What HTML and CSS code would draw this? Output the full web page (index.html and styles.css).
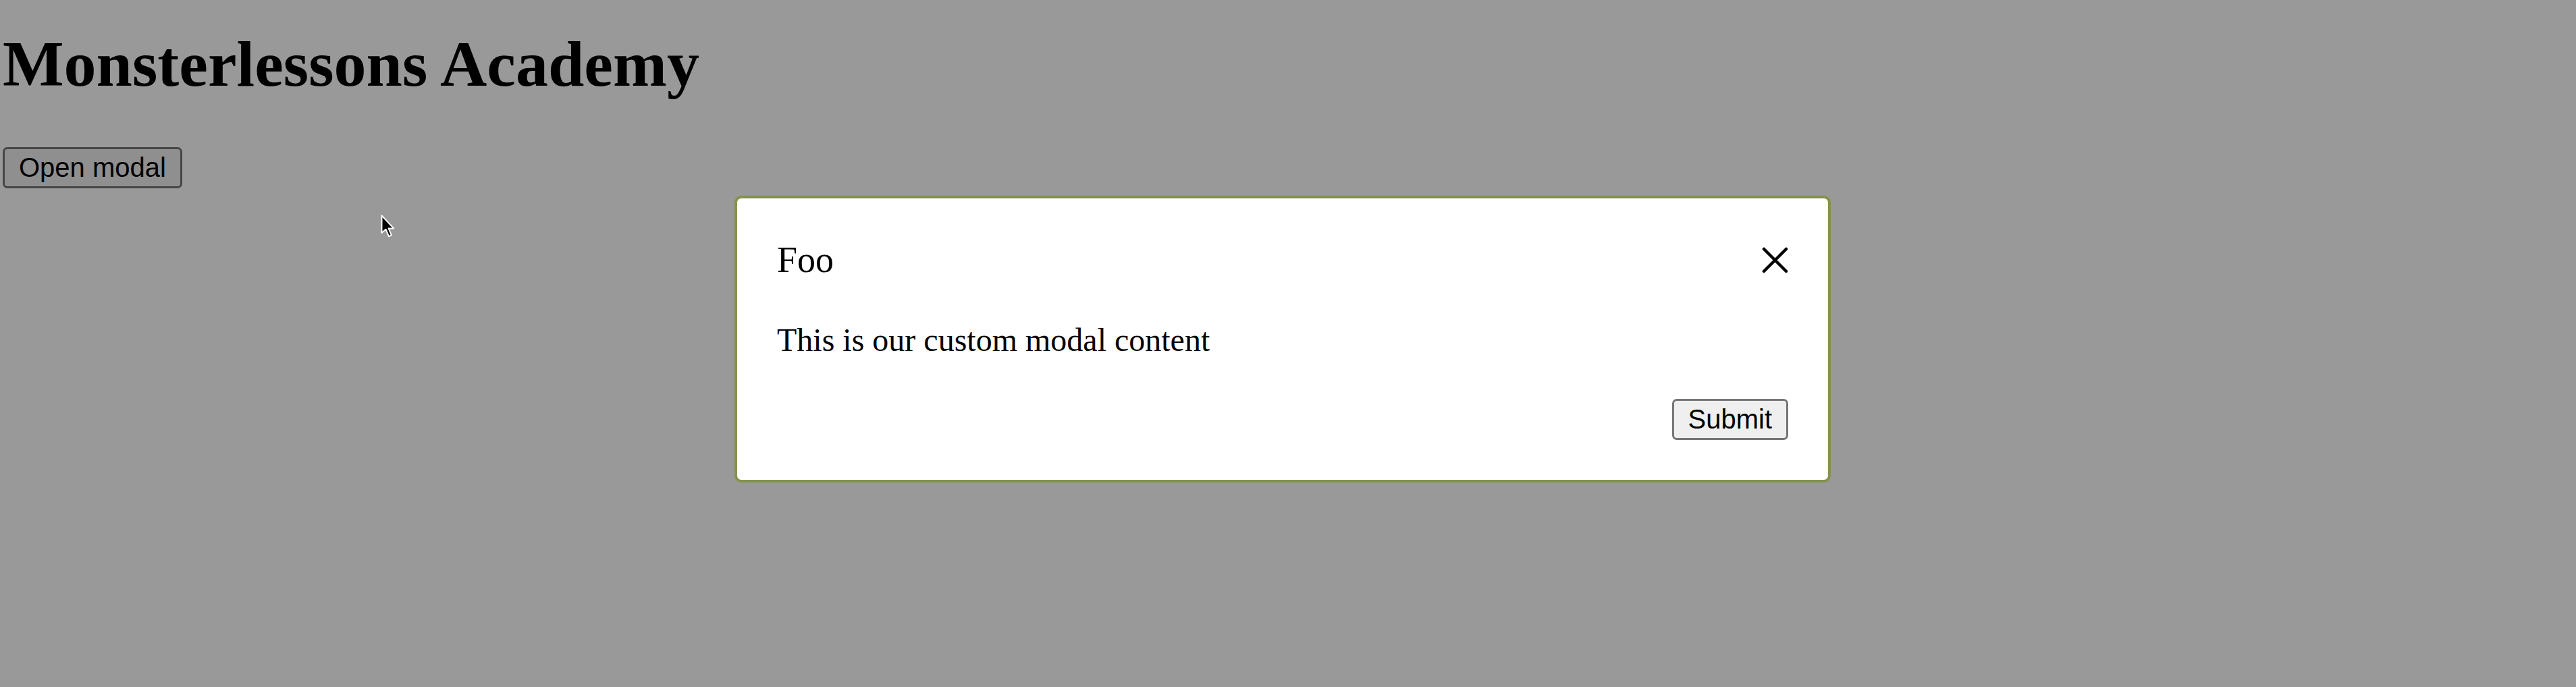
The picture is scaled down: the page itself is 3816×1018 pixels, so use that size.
FILE: index.html
```html
<!DOCTYPE html>
<html lang="en">
<head>
  <meta charset="UTF-8" />
  <meta name="viewport" content="width=device-width, initial-scale=1.0"/>
  <title>Monsterlessons Academy</title>
  <link rel="stylesheet" href="styles.css">
</head>
<body>
  <h1 class="title">Monsterlessons Academy</h1>
  <button class="btn" id="openModal">Open modal</button>

  <div class="backdrop" id="backdrop">
    <div class="modal">
      <div class="modal-header">
        <div class="modal-title">Foo</div>
        <span class="modal-close" title="Close">
          <svg width="39" height="39" viewBox="0 0 39 39">
            <path d="M3 3 L36 36 M36 3 L3 36" stroke="#000" stroke-width="4.5" stroke-linecap="round" fill="none"/>
          </svg>
        </span>
      </div>
      <div class="modal-body">This is our custom modal content</div>
      <div class="modal-footer">
        <button class="btn btn-light">Submit</button>
      </div>
    </div>
  </div>

  <svg class="pointer" width="24" height="36" viewBox="0 0 16 24">
    <path d="M1 1 L1 18 L5 14.5 L8 21.5 L10.6 20.4 L7.7 13.6 L12.8 13.6 Z" fill="#000" stroke="#fff" stroke-width="1.3" stroke-linejoin="round"/>
  </svg>
</body>
</html>
```

FILE: styles.css
```css
body {
  margin: 0;
  padding: 40px 0 0 4px;
  background: #fff;
  font-family: "Liberation Serif", "Times New Roman", serif;
  color: #000;
  min-height: 1018px;
  box-sizing: border-box;
}
.title {
  margin: 0 0 68px;
  font-size: 96px;
  line-height: 110px;
  font-weight: bold;
}
.btn {
  font-family: "Liberation Sans", Arial, sans-serif;
  font-size: 40px;
  line-height: 43px;
  padding: 6px 21px;
  border: 3px solid #767676;
  border-radius: 7px;
  background: #efefef;
  color: #000;
  cursor: pointer;
}

/* dimmed layer over the page, modal sits on top */
.backdrop {
  position: fixed;
  top: 0; left: 0;
  width: 100%; height: 100%;
  background: rgba(0, 0, 0, 0.4);
  display: flex;
  justify-content: center;
  align-items: flex-start;
  padding: 290px 16px 0 0;
  box-sizing: border-box;
}
.modal {
  width: 1624px;
  box-sizing: border-box;
  background: #fff;
  border: 4px solid #84924e;
  border-radius: 10px;
  padding: 60px 59px 59px;
  display: flex;
  flex-direction: column;
  gap: 60px;
}
.modal-header {
  display: flex;
  justify-content: space-between;
  align-items: center;
}
.modal-title {
  font-size: 54px;
  line-height: 62px;
}
.modal-close {
  display: flex;
  cursor: pointer;
}
.modal-body {
  font-size: 48px;
  line-height: 55px;
}
.modal-footer {
  display: flex;
  justify-content: flex-end;
}

.pointer {
  position: absolute;
  left: 564px;
  top: 318px;
}
```
